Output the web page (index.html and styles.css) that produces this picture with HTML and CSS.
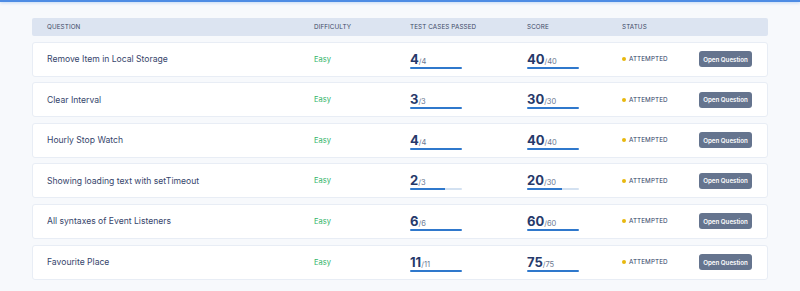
FILE: index.html
```html
<!DOCTYPE html>
<html>
<head>
<meta charset="utf-8">
<link rel="stylesheet" href="styles.css">
</head>
<body>
<div class="topbar"></div>
<div class="table">
  <div class="head">
    <div>Question</div>
    <div>Difficulty</div>
    <div>Test Cases Passed</div>
    <div>Score</div>
    <div>Status</div>
    <div></div>
  </div>

  <div class="row">
    <div class="q">Remove Item in Local Storage</div>
    <div class="easy">Easy</div>
    <div class="metric"><div class="num"><b>4</b><span>/4</span></div><div class="bar"><i style="width:100%"></i></div></div>
    <div class="metric"><div class="num"><b>40</b><span>/40</span></div><div class="bar"><i style="width:100%"></i></div></div>
    <div class="status"><span class="dot"></span>ATTEMPTED</div>
    <div class="action"><button class="btn">Open Question</button></div>
  </div>

  <div class="row">
    <div class="q">Clear Interval</div>
    <div class="easy">Easy</div>
    <div class="metric"><div class="num"><b>3</b><span>/3</span></div><div class="bar"><i style="width:100%"></i></div></div>
    <div class="metric"><div class="num"><b>30</b><span>/30</span></div><div class="bar"><i style="width:100%"></i></div></div>
    <div class="status"><span class="dot"></span>ATTEMPTED</div>
    <div class="action"><button class="btn">Open Question</button></div>
  </div>

  <div class="row">
    <div class="q">Hourly Stop Watch</div>
    <div class="easy">Easy</div>
    <div class="metric"><div class="num"><b>4</b><span>/4</span></div><div class="bar"><i style="width:100%"></i></div></div>
    <div class="metric"><div class="num"><b>40</b><span>/40</span></div><div class="bar"><i style="width:100%"></i></div></div>
    <div class="status"><span class="dot"></span>ATTEMPTED</div>
    <div class="action"><button class="btn">Open Question</button></div>
  </div>

  <div class="row">
    <div class="q">Showing loading text with setTimeout</div>
    <div class="easy">Easy</div>
    <div class="metric"><div class="num"><b>2</b><span>/3</span></div><div class="bar"><i style="width:66.7%"></i></div></div>
    <div class="metric"><div class="num"><b>20</b><span>/30</span></div><div class="bar"><i style="width:66.7%"></i></div></div>
    <div class="status"><span class="dot"></span>ATTEMPTED</div>
    <div class="action"><button class="btn">Open Question</button></div>
  </div>

  <div class="row">
    <div class="q">All syntaxes of Event Listeners</div>
    <div class="easy">Easy</div>
    <div class="metric"><div class="num"><b>6</b><span>/6</span></div><div class="bar"><i style="width:100%"></i></div></div>
    <div class="metric"><div class="num"><b>60</b><span>/60</span></div><div class="bar"><i style="width:100%"></i></div></div>
    <div class="status"><span class="dot"></span>ATTEMPTED</div>
    <div class="action"><button class="btn">Open Question</button></div>
  </div>

  <div class="row">
    <div class="q">Favourite Place</div>
    <div class="easy">Easy</div>
    <div class="metric"><div class="num"><b>11</b><span>/11</span></div><div class="bar"><i style="width:100%"></i></div></div>
    <div class="metric"><div class="num"><b>75</b><span>/75</span></div><div class="bar"><i style="width:100%"></i></div></div>
    <div class="status"><span class="dot"></span>ATTEMPTED</div>
    <div class="action"><button class="btn">Open Question</button></div>
  </div>
</div>
</body>
</html>
```

FILE: styles.css
```css
html, body {
  margin: 0;
  padding: 0;
  background: #f7f9fc;
  font-family: Inter, "Noto Sans", sans-serif;
  color: #334266;
}

.topbar {
  height: 2px;
  background: #4e8ce4;
  box-shadow: 0 1px 3px rgba(78, 140, 228, 0.35);
}

.table {
  width: 736px;
  margin: 16px 0 0 32px;
  display: flex;
  flex-direction: column;
  gap: 5.6px;
}

.head, .row {
  display: grid;
  grid-template-columns: 267px 96px 117px 95px 77px 1fr;
  align-items: center;
  padding-left: 15px;
}

.head {
  height: 18px;
  background: #dce4f1;
  border-radius: 2px;
  font-size: 6.3px;
  text-transform: uppercase;
  color: #3d4a66;
  letter-spacing: 0.1px;
}

.row {
  height: 35px;
  box-sizing: border-box;
  background: #ffffff;
  border: 1px solid #e8edf5;
  border-radius: 3px;
  padding-left: 14px;
}

.q {
  font-size: 8.6px;
  color: #36456b;
}

.easy {
  font-size: 7.5px;
  color: #2fb468;
}

.metric {
  display: flex;
  flex-direction: column;
  width: 52px;
  padding-top: 2px;
}

.num {
  line-height: 12px;
  height: 12px;
  white-space: nowrap;
}

.num b {
  font-size: 13px;
  font-weight: 700;
  color: #26396a;
}

.num span {
  font-size: 7.5px;
  color: #6b7891;
}

.bar {
  margin-top: 3px;
  height: 2px;
  background: #d3e1f1;
  border-radius: 1px;
  overflow: hidden;
}

.bar i {
  display: block;
  height: 100%;
  background: #2f78cc;
}

.status {
  display: flex;
  align-items: center;
  font-size: 6.3px;
  color: #2e3d66;
  letter-spacing: 0.1px;
}

.dot {
  width: 4px;
  height: 4px;
  border-radius: 50%;
  background: #e8b80d;
  margin-right: 3px;
}

.action {
  display: flex;
  align-items: center;
}

.btn {
  display: block;
  width: 53px;
  height: 16px;
  border: none;
  border-radius: 3px;
  background: #65748e;
  color: #ffffff;
  font-family: Inter, "Noto Sans", sans-serif;
  font-size: 6.2px;
  font-weight: 600;
  padding: 0;
  cursor: pointer;
}
```
